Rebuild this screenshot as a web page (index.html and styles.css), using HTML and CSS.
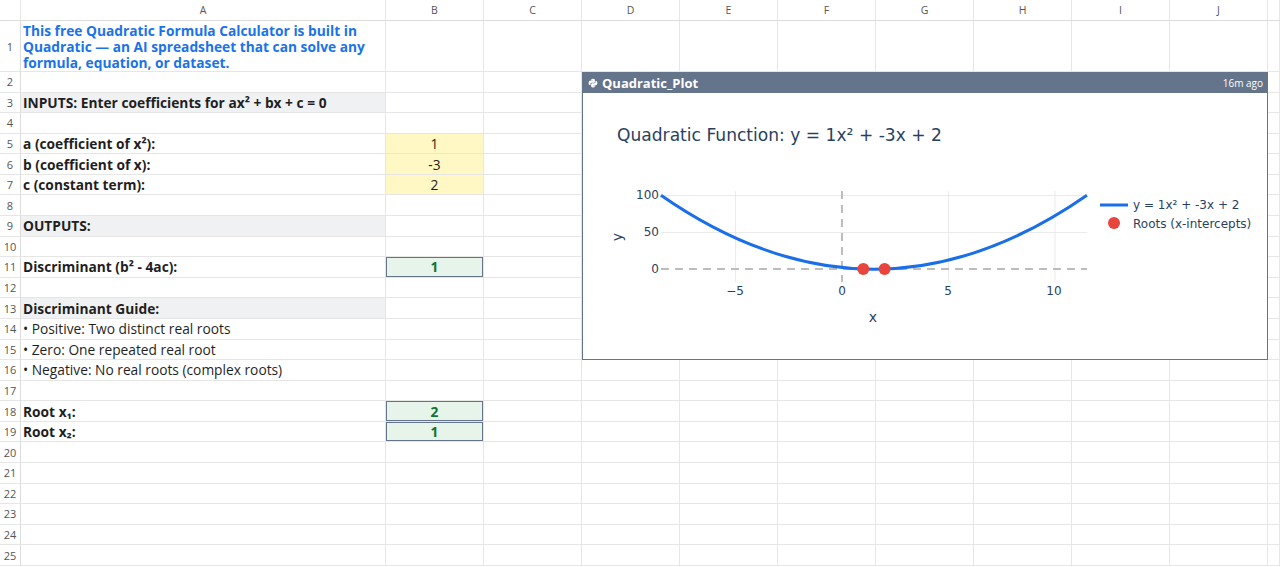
FILE: index.html
```html
<!DOCTYPE html>
<html lang="en">
<head>
    <meta charset="UTF-8">
    <meta name="viewport" content="width=device-width, initial-scale=1.0">
    <title>Quadratic Formula Calculator</title>
    <link rel="stylesheet" href="styles.css">
</head>
<body>

<div class="sheet" id="sheet">
    <!-- Cells are generated below -->
</div>

<!-- Chart window floating over the grid -->
<div class="chart">
    <div class="chart-header">
        <div class="chart-name">
            <svg class="py-icon" width="10" height="10" viewBox="0 0 16 16">
                <path fill="#fff" d="M7.9 1C4.4 1 4.6 2.5 4.6 2.5V4h3.4v.5H3.2S1 4.3 1 7.9s1.9 3.4 1.9 3.4H4V9.6s-.1-1.9 1.9-1.9h3.3s1.8 0 1.8-1.8V2.9S11.3 1 7.9 1zM6.1 2a.6.6 0 110 1.2.6.6 0 010-1.2z"/>
                <path fill="#fff" d="M8.1 15c3.5 0 3.3-1.5 3.3-1.5V12H8v-.5h4.8s2.2.2 2.2-3.4-1.9-3.4-1.9-3.4H12v1.7s.1 1.9-1.9 1.9H6.8S5 8.3 5 10.1v3S4.7 15 8.1 15zm1.8-1a.6.6 0 110-1.2.6.6 0 010 1.2z"/>
            </svg>
            Quadratic_Plot
        </div>
        <div class="chart-time">16m ago</div>
    </div>
    <svg class="plot" width="684" height="265" viewBox="583 93 684 265">
        <text class="plot-title" x="617" y="141">Quadratic Function: y = 1x² + -3x + 2</text>

        <!-- grid -->
        <g stroke="#ebebeb" stroke-width="1">
            <line x1="735.5" y1="191" x2="735.5" y2="282"/>
            <line x1="948.5" y1="191" x2="948.5" y2="282"/>
            <line x1="1055" y1="191" x2="1055" y2="282"/>
            <line x1="661" y1="195.5" x2="1087" y2="195.5"/>
            <line x1="661" y1="232.5" x2="1087" y2="232.5"/>
        </g>
        <g stroke="#bdbdbd" stroke-width="2" stroke-dasharray="8 6">
            <line x1="661" y1="269" x2="1087" y2="269"/>
            <line x1="842" y1="191" x2="842" y2="282"/>
        </g>

        <!-- curve and roots -->
        <path d="M660.95 195.19 Q873.95 343.19 1086.95 195.19" fill="none" stroke="#1a6ee8" stroke-width="3"/>
        <circle cx="863.3" cy="269" r="6" fill="#e8453c"/>
        <circle cx="884.6" cy="269" r="6" fill="#e8453c"/>

        <!-- ticks -->
        <g class="tick" text-anchor="end">
            <text x="659" y="199">100</text>
            <text x="659" y="236">50</text>
            <text x="659" y="273">0</text>
        </g>
        <g class="tick" text-anchor="middle">
            <text x="735" y="295">−5</text>
            <text x="842" y="295">0</text>
            <text x="948" y="295">5</text>
            <text x="1054" y="295">10</text>
        </g>
        <text class="axis-title" x="873" y="322" text-anchor="middle">x</text>
        <text class="axis-title" x="622" y="237" text-anchor="middle" transform="rotate(-90 622 237)">y</text>

        <!-- legend -->
        <line x1="1100" y1="205" x2="1128" y2="205" stroke="#1a6ee8" stroke-width="3"/>
        <text class="legend" x="1133" y="209">y = 1x² + -3x + 2</text>
        <circle cx="1114" cy="223" r="6" fill="#e8453c"/>
        <text class="legend" x="1133" y="228">Roots (x-intercepts)</text>
    </svg>
</div>

<script>
const columns = ['A', 'B', 'C', 'D', 'E', 'F', 'G', 'H', 'I', 'J', ''];

const rows = {
    1: { a: 'This free Quadratic Formula Calculator is built in Quadratic — an AI spreadsheet that can solve any formula, equation, or dataset.', aClass: 'intro' },
    3: { a: 'INPUTS: Enter coefficients for ax² + bx + c = 0', aClass: 'bold section' },
    5: { a: 'a (coefficient of x²):', aClass: 'bold', b: '1', bClass: 'input' },
    6: { a: 'b (coefficient of x):', aClass: 'bold', b: '-3', bClass: 'input' },
    7: { a: 'c (constant term):', aClass: 'bold', b: '2', bClass: 'input' },
    9: { a: 'OUTPUTS:', aClass: 'bold section' },
    11: { a: 'Discriminant (b² - 4ac):', aClass: 'bold', b: '1', bClass: 'output' },
    13: { a: 'Discriminant Guide:', aClass: 'bold section' },
    14: { a: '• Positive: Two distinct real roots' },
    15: { a: '• Zero: One repeated real root' },
    16: { a: '• Negative: No real roots (complex roots)' },
    18: { a: 'Root x₁:', aClass: 'bold', b: '2', bClass: 'output' },
    19: { a: 'Root x₂:', aClass: 'bold', b: '1', bClass: 'output' }
};

function buildSheet() {
    const sheet = document.getElementById('sheet');
    let html = '<div class="cell corner"></div>';

    columns.forEach(col => {
        html += `<div class="cell col-head">${col}</div>`;
    });

    for (let r = 1; r <= 25; r++) {
        const row = rows[r] || {};
        html += `<div class="cell row-head">${r}</div>`;
        html += `<div class="cell ${row.aClass || ''}">${row.a || ''}</div>`;
        html += `<div class="cell num ${row.bClass || ''}">${row.b || ''}</div>`;
        for (let c = 2; c < columns.length; c++) {
            html += '<div class="cell"></div>';
        }
    }

    sheet.innerHTML = html;
}

buildSheet();
</script>

</body>
</html>
```

FILE: styles.css
```css
body {
    margin: 0;
    padding: 0;
    font-family: "Open Sans", "Liberation Sans", sans-serif;
    background-color: #fff;
    color: #1f1f1f;
    overflow: hidden;
}
.sheet {
    display: grid;
    width: 1280px;
    grid-template-columns: 21px 365px repeat(9, 98px) 12px;
    grid-template-rows: 21px 51px repeat(24, 20.58px);
}
.cell {
    box-sizing: border-box;
    border-right: 1px solid #e6e6e6;
    border-bottom: 1px solid #e6e6e6;
    font-size: 13.75px;
    padding: 0 2px;
    display: flex;
    align-items: center;
    white-space: nowrap;
    overflow: hidden;
}
.corner {
    border-bottom-color: #dcdcdc;
}
.col-head {
    justify-content: center;
    font-size: 10.5px;
    color: #555;
    border-bottom-color: #dcdcdc;
}
.row-head {
    justify-content: center;
    padding: 0;
    font-size: 11px;
    color: #555;
    border-right-color: #dcdcdc;
}
.intro {
    white-space: normal;
    color: #1a73e8;
    font-weight: bold;
    line-height: 16px;
    align-items: flex-start;
    padding-top: 2px;
}
.bold {
    font-weight: bold;
}
.section {
    background-color: #f0f1f3;
}
.num {
    justify-content: center;
}
.input {
    background-color: #fff8c5;
}
.output {
    background-color: #e6f4ea;
    box-shadow: inset 0 0 0 1px #64748b;
    color: #137333;
    font-weight: bold;
}

/* chart window */
.chart {
    position: absolute;
    left: 582px;
    top: 72px;
    width: 686px;
    height: 288px;
    box-sizing: border-box;
    border: 1px solid #64748b;
    background-color: #fff;
}
.chart-header {
    height: 20px;
    background-color: #64748b;
    color: #fff;
    display: flex;
    align-items: center;
    justify-content: space-between;
    padding: 0 4px 0 5px;
}
.chart-name {
    display: flex;
    align-items: center;
    gap: 4px;
    font-size: 13px;
    font-weight: bold;
}
.chart-time {
    font-size: 10px;
}
.plot {
    display: block;
    font-family: "DejaVu Sans", Verdana, sans-serif;
}
.plot-title {
    font-size: 17.1px;
    fill: #2a3f5f;
}
.tick {
    font-size: 12px;
    fill: #2a3f5f;
}
.axis-title {
    font-size: 14px;
    fill: #2a3f5f;
}
.legend {
    font-size: 12px;
    fill: #2a3f5f;
}
```
